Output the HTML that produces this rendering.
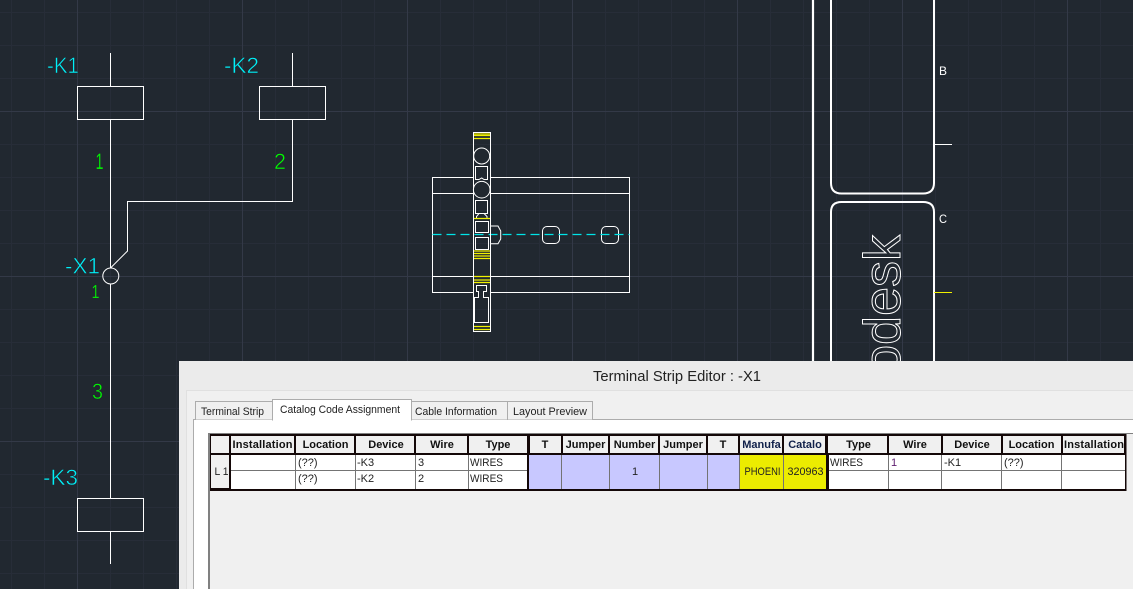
<!DOCTYPE html>
<html><head><meta charset="utf-8"><title>Terminal Strip Editor</title>
<style>
html,body{margin:0;padding:0;background:#212830;width:1133px;height:589px;overflow:hidden}
svg{display:block}
text{font-family:"Liberation Sans",sans-serif}
.c{fill:#00f0f8;font-size:22px;stroke:#212830;stroke-width:.55px}
.g{fill:#00ff00;font-size:22px;stroke:#212830;stroke-width:.55px}
.n{stroke-width:.2px}
.w{fill:#fff;font-size:12px}
.h{font-size:11px;font-weight:bold;fill:#111;text-anchor:middle}
.b{font-size:11px;fill:#222}
.t{font-size:11px;fill:#222}
</style></head><body>
<svg width="1133" height="589" viewBox="0 0 1133 589" xmlns="http://www.w3.org/2000/svg">
<rect width="1133" height="589" fill="#212830"/>
<!-- minor grid -->
<g stroke="#272d38" stroke-width="1" fill="none">
<path d="M11.5 0V589M44.5 0V589M110.5 0V589M143.5 0V589M176.5 0V589M209.5 0V589M275.5 0V589M308.5 0V589M341.5 0V589M374.5 0V589M440.5 0V589M473.5 0V589M506.5 0V589M539.5 0V589M605.5 0V589M638.5 0V589M671.5 0V589M704.5 0V589M770.5 0V589M803.5 0V589M836.5 0V589M869.5 0V589M935.5 0V589M968.5 0V589M1001.5 0V589M1034.5 0V589M1100.5 0V589"/>
<path d="M0 12.5H1133M0 45.5H1133M0 78.5H1133M0 144.5H1133M0 177.5H1133M0 210.5H1133M0 243.5H1133M0 309.5H1133M0 342.5H1133M0 375.5H1133M0 408.5H1133M0 474.5H1133M0 507.5H1133M0 540.5H1133M0 573.5H1133"/>
</g>
<g stroke="#333947" stroke-width="1" fill="none">
<path d="M77.5 0V589M242.5 0V589M407.5 0V589M572.5 0V589M737.5 0V589M902.5 0V589M1067.5 0V589"/>
<path d="M0 111.5H1133M0 276.5H1133M0 441.5H1133"/>
</g>
<!-- schematic -->
<g stroke="#fff" stroke-width="1" fill="none">
<path d="M110.5 53V86.5M110.5 119.5V268M110.5 284V498.5M110.5 531.5V564"/>
<path d="M292.5 53V86.5M292.5 119.5V201.5H127.5V251L110.5 268"/>
<rect x="77.5" y="86.5" width="66" height="33"/>
<rect x="259.5" y="86.5" width="66" height="33"/>
<rect x="77.5" y="498.5" width="66" height="33"/>
<circle cx="110.8" cy="276" r="8"/>
</g>
<text class="c" x="47" y="73" textLength="32" lengthAdjust="spacingAndGlyphs">-K1</text>
<text class="c" x="224" y="73" textLength="35" lengthAdjust="spacingAndGlyphs">-K2</text>
<text class="c" x="65" y="273.5" textLength="35" lengthAdjust="spacingAndGlyphs">-X1</text>
<text class="c" x="43" y="485" textLength="35" lengthAdjust="spacingAndGlyphs">-K3</text>
<text class="g n" x="95.5" y="169" textLength="8" lengthAdjust="spacingAndGlyphs">1</text>
<text class="g" x="274" y="169" textLength="12" lengthAdjust="spacingAndGlyphs">2</text>
<text class="g n" x="91.5" y="298" style="font-size:18px" textLength="8" lengthAdjust="spacingAndGlyphs">1</text>
<text class="g" x="92" y="399" textLength="11" lengthAdjust="spacingAndGlyphs">3</text>
<!-- rail -->
<g stroke="#fff" stroke-width="1" fill="none">
<path d="M473.5 177.5H432.5V292.5H473.5M490.5 177.5H629.5V292.5H490.5"/>
<path d="M432.5 193.5H473.5M490.5 193.5H629.5M432.5 276.5H473.5M490.5 276.5H629.5"/>
<path d="M490.5 226H498L500.7 231V239L498 243.7H490.5"/>
<rect x="542.5" y="226.5" width="17" height="17" rx="4.5"/>
<rect x="601.5" y="226.5" width="17" height="17" rx="4.5"/>
</g>
<path d="M432.5 234.5H629.5" stroke="#00e4e8" stroke-width="1.2" stroke-dasharray="9 5" fill="none"/>
<!-- terminal -->
<g stroke="#fff" stroke-width="1" fill="none">
<rect x="473.5" y="132.5" width="17" height="199"/>
<circle cx="481.7" cy="156" r="8"/>
<circle cx="481.7" cy="189.7" r="8.3"/>
<path d="M475.5 166.5H487.5V179.5H484L481.7 178L479 179.5H475.5Z"/>
<path d="M475.5 200.5H487.5V213.5H475.5Z"/>
<path d="M476.5 218.5V216.5L479 213.5H484L487 216.5V218.5"/>
<rect x="475.5" y="221.5" width="13" height="11"/>
<rect x="475.5" y="237.5" width="13" height="12"/>
<path d="M476.5 285.5H486.5V291.5H483.5V297.5H488.5V322.5H474.5V297.5H478.5V291.5H476.5Z"/>
</g>
<g stroke="#f0f000" stroke-width="1.3" fill="none">
<path d="M474 134H490M474 135.5H490M474 138.5H490M474 218.5H490M474 251H490M474 253.5H490M474 256H490M474 258.5H490M474 276.5H490M474 280H490M474 282.5H490M474 326.5H490M474 329.5H490"/>
</g>
<!-- right frame -->
<g stroke="#fff" fill="none">
<path d="M813 0V362" stroke-width="2.2"/>
<path d="M831 0V183Q831 193.5 841.5 193.5H923Q934 193.5 934 183V0" stroke-width="2"/>
<path d="M831 362V212Q831 202 841.5 202H923Q934 202 934 212V362" stroke-width="2"/>
<path d="M934 144.5H952" stroke-width="1"/>
</g>
<path d="M934 292.5H952" stroke="#f0f000" stroke-width="1"/>
<text class="w" x="939" y="75" textLength="8" lengthAdjust="spacingAndGlyphs">B</text>
<text class="w" x="939" y="223" textLength="8" lengthAdjust="spacingAndGlyphs">C</text>
<text transform="translate(900,235) rotate(-90)" text-anchor="end" fill="none" stroke="#fff" stroke-width="1" style="font-size:52px">Autodesk</text>

<!-- dialog -->
<rect x="179" y="361" width="954" height="228" fill="#ebebeb"/>
<rect x="186.5" y="390.5" width="947" height="199" fill="#f0f0f0" stroke="#e0e0e0"/>
<text x="677" y="381" text-anchor="middle" fill="#222" style="font-size:14.5px" textLength="168" lengthAdjust="spacingAndGlyphs">Terminal Strip Editor : -X1</text>
<rect x="193.5" y="419.5" width="940" height="170" fill="#fff" stroke="#acacac"/>
<!-- tabs -->
<g stroke="#acacac" fill="#f0f0f0">
<path d="M272.5 419.5V401.5H195.5V419.5"/>
<path d="M411.5 419.5V401.5H507.5V419.5"/>
<path d="M507.5 419.5V401.5H592.5V419.5"/>
<path d="M272.5 420V399.5H411.5V420Z" fill="#fff"/>
</g>
<rect x="273" y="418" width="138" height="3" fill="#fff"/>
<text class="t" x="201" y="415" textLength="63" lengthAdjust="spacingAndGlyphs">Terminal Strip</text>
<text class="t" x="280" y="413" textLength="120" lengthAdjust="spacingAndGlyphs">Catalog Code Assignment</text>
<text class="t" x="415" y="415" textLength="82" lengthAdjust="spacingAndGlyphs">Cable Information</text>
<text class="t" x="513" y="415" textLength="74" lengthAdjust="spacingAndGlyphs">Layout Preview</text>
<!-- grid area -->
<rect x="208" y="433" width="925" height="156" fill="#808080"/>
<rect x="210" y="434" width="923" height="155" fill="#f0f0f0"/>
<rect x="210" y="434" width="916.5" height="57" fill="#140808"/>
<!-- header cells -->
<g fill="#f0f0f0">
<rect x="211" y="436" width="18" height="17"/>
<rect x="231" y="436" width="63" height="17"/>
<rect x="296" y="436" width="58" height="17"/>
<rect x="356" y="436" width="58" height="17"/>
<rect x="416" y="436" width="51" height="17"/>
<rect x="469" y="436" width="58" height="17"/>
<rect x="530" y="436" width="31" height="17"/>
<rect x="563" y="436" width="45" height="17"/>
<rect x="610" y="436" width="48" height="17"/>
<rect x="660" y="436" width="46" height="17"/>
<rect x="708" y="436" width="30" height="17"/>
<rect x="740" y="436" width="42" height="17"/>
<rect x="784" y="436" width="41" height="17"/>
<rect x="828" y="436" width="59" height="17"/>
<rect x="889" y="436" width="52" height="17"/>
<rect x="943" y="436" width="58" height="17"/>
<rect x="1003" y="436" width="58" height="17"/>
<rect x="1063" y="436" width="61" height="17"/>
<rect x="211" y="455" width="18" height="33"/>
</g>
<!-- body -->
<rect x="231" y="455" width="296" height="34" fill="#fff"/>
<rect x="829" y="455" width="296" height="34" fill="#fff"/>
<rect x="529" y="455" width="210.5" height="34" fill="#c8c8ff"/>
<rect x="740" y="455" width="86" height="34" fill="#ecec00"/>
<g stroke="#747474" fill="none" stroke-width="1">
<path d="M231 470.5H527M829 470.5H1125"/>
<path d="M295.5 455V489M355.5 455V489M415.5 455V489M468.5 455V489M561.5 455V489M609.5 455V489M659.5 455V489M707.5 455V489M739.5 455V489M783.5 455V489M888.5 455V489M941.5 455V489M1001.5 455V489M1061.5 455V489"/>
</g>
<!-- headers -->
<text class="h" x="262.5" y="448" textLength="60" lengthAdjust="spacing">Installation</text>
<text class="h" x="325.5" y="448">Location</text>
<text class="h" x="386" y="448">Device</text>
<text class="h" x="442" y="448">Wire</text>
<text class="h" x="498" y="448">Type</text>
<text class="h" x="545" y="448">T</text>
<text class="h" x="585.5" y="448">Jumper</text>
<text class="h" x="634.5" y="448">Number</text>
<text class="h" x="683" y="448">Jumper</text>
<text class="h" x="723" y="448">T</text>
<text class="h" x="761.5" y="448" style="fill:#10204a">Manufa</text>
<text class="h" x="805" y="448" style="fill:#10204a">Catalo</text>
<text class="h" x="858.5" y="448">Type</text>
<text class="h" x="915" y="448">Wire</text>
<text class="h" x="972" y="448">Device</text>
<text class="h" x="1031.5" y="448">Location</text>
<text class="h" x="1094" y="448" textLength="60" lengthAdjust="spacing">Installation</text>
<!-- cells -->
<text class="b" x="214.5" y="475" textLength="14" lengthAdjust="spacingAndGlyphs">L 1</text>
<text class="b" x="298" y="466">(??)</text><text class="b" x="357" y="466">-K3</text><text class="b" x="418" y="466">3</text><text class="b" x="470" y="466" textLength="33" lengthAdjust="spacingAndGlyphs">WIRES</text>
<text class="b" x="298" y="482">(??)</text><text class="b" x="357" y="482">-K2</text><text class="b" x="418" y="482">2</text><text class="b" x="470" y="482" textLength="33" lengthAdjust="spacingAndGlyphs">WIRES</text>
<text class="b" x="632" y="475">1</text>
<text class="b" x="744.5" y="475" textLength="36" lengthAdjust="spacingAndGlyphs">PHOENI</text>
<text class="b" x="787.5" y="475" textLength="36" lengthAdjust="spacingAndGlyphs">320963</text>
<text class="b" x="830" y="466" textLength="33" lengthAdjust="spacingAndGlyphs">WIRES</text><text class="b" x="891" y="466" style="fill:#602070">1</text><text class="b" x="944" y="466">-K1</text><text class="b" x="1004" y="466">(??)</text>
</svg>
</body></html>
